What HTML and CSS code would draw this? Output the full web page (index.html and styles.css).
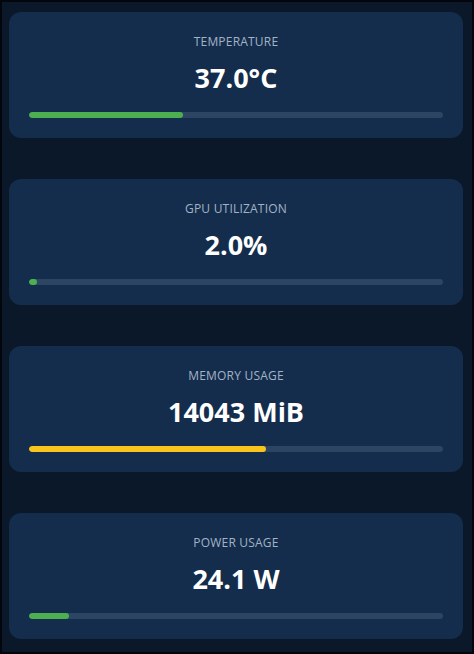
FILE: index.html
```html
<!DOCTYPE html>
<html>
<head>
<meta charset="utf-8">
<link rel="stylesheet" href="styles.css">
</head>
<body>
<div class="frame">
  <div class="card">
    <div class="label">TEMPERATURE</div>
    <div class="value">37.0°C</div>
    <div class="track"><div class="fill green" style="width:37.2%"></div></div>
  </div>
  <div class="card">
    <div class="label">GPU UTILIZATION</div>
    <div class="value">2.0%</div>
    <div class="track"><div class="fill green" style="width:2%"></div></div>
  </div>
  <div class="card">
    <div class="label">MEMORY USAGE</div>
    <div class="value">14043 MiB</div>
    <div class="track"><div class="fill yellow" style="width:57.2%"></div></div>
  </div>
  <div class="card">
    <div class="label">POWER USAGE</div>
    <div class="value">24.1 W</div>
    <div class="track"><div class="fill green" style="width:9.7%"></div></div>
  </div>
</div>
</body>
</html>
```
FILE: styles.css
```css
html, body {
  margin: 0;
  padding: 0;
  background: #050b14;
}
body {
  font-family: "Open Sans", "Noto Sans", sans-serif;
}
.frame {
  box-sizing: border-box;
  width: 474px;
  height: 654px;
  border: 2px solid #03070d;
  background: #0b1829;
  padding: 10px 9px 0 7px;
  display: flex;
  flex-direction: column;
  gap: 41px;
  overflow: hidden;
}
.card {
  background: #142d4c;
  border-radius: 12px;
  padding: 22px 20px 20px;
  display: flex;
  flex-direction: column;
  align-items: center;
}
.label {
  font-size: 12px;
  line-height: 16px;
  color: #a3b3c7;
  letter-spacing: 0.2px;
}
.value {
  margin-top: 10px;
  font-size: 27px;
  line-height: 36px;
  font-weight: 700;
  color: #ffffff;
}
.track {
  margin-top: 16px;
  align-self: stretch;
  height: 6px;
  border-radius: 3px;
  background: #2c4562;
  overflow: hidden;
}
.fill {
  height: 100%;
  border-radius: 3px;
}
.green { background: #4cb050; }
.yellow { background: #f8c51c; }
```
